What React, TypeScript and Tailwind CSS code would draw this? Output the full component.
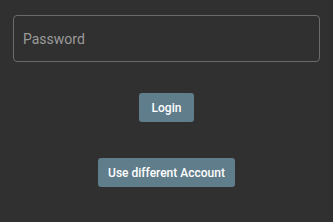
import React from 'react';

export default function App() {
  return (
    <div className="w-[333px] h-[222px] bg-[#303030] px-[13px] pt-[15px] font-['Roboto',sans-serif] flex flex-col items-center">
      <input
        type="password"
        placeholder="Password"
        className="w-full h-[47px] rounded-[4px] border border-[#6a6a6a] bg-transparent px-[9px] text-[14px] text-white placeholder:text-[#9b9b9b] outline-none"
      />
      <button className="mt-[31px] h-[29px] px-[13px] rounded-[3px] bg-[#607d8b] text-white text-[12px] font-medium">
        Login
      </button>
      <button className="mt-[36px] h-[29px] px-[10px] rounded-[3px] bg-[#607d8b] text-white text-[12px] font-medium">
        Use different Account
      </button>
    </div>
  );
}
